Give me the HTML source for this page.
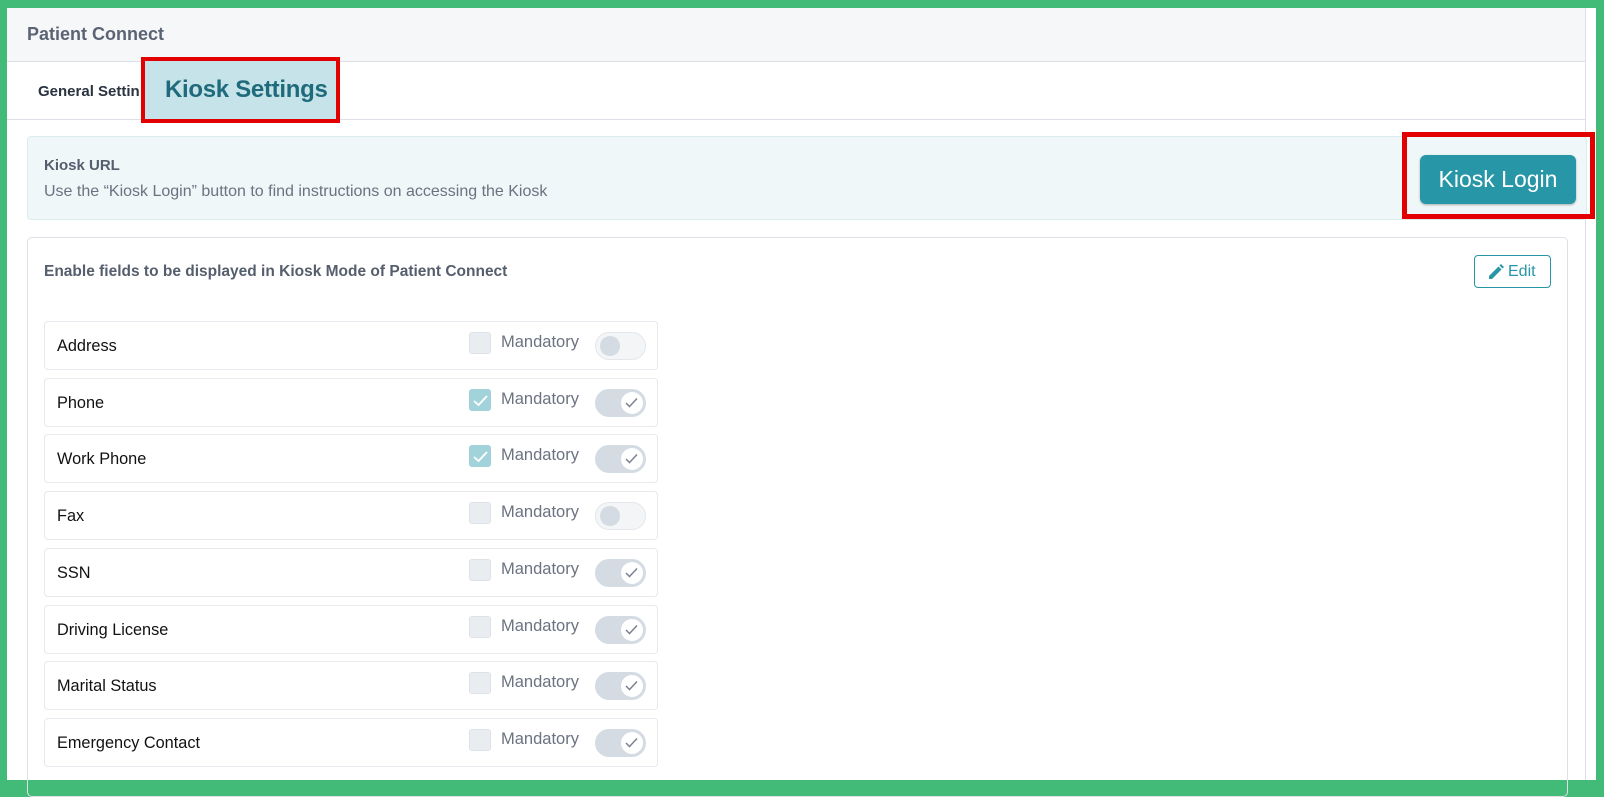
<!DOCTYPE html>
<html><head><style>
*{box-sizing:border-box;margin:0;padding:0}
body{width:1604px;height:788px;background:#43bb78;position:relative;overflow:hidden;font-family:"Liberation Sans",Arial,sans-serif}
.page{position:absolute;left:7px;top:8px;width:1589px;height:772px;background:#fff}
.panel{position:absolute;left:0;top:0;width:1579px;height:772px;border-right:1px solid #dde1e7;background:#fff}
.hdr{position:absolute;left:0;top:0;width:1578px;height:54px;background:#f6f7f9;border-bottom:1px solid #dde1e7}
.hdr span{position:absolute;left:20px;top:16px;font-size:18px;font-weight:bold;color:#5b6474;white-space:nowrap}
.tabs{position:absolute;left:0;top:54px;width:1578px;height:58px;border-bottom:1px solid #dde1e7}
.gen{position:absolute;left:31px;top:21px;font-size:15px;font-weight:bold;color:#2b3340;white-space:nowrap}
.redtab{position:absolute;left:134px;top:49px;width:199px;height:66px;border:4px solid #e30000;background:#c5e3e8}
.redtab span{position:absolute;left:20px;top:15px;font-size:24px;font-weight:bold;color:#1f6b7c;letter-spacing:-0.3px;white-space:nowrap}
.url{position:absolute;left:20px;top:128px;width:1560px;height:84px;background:#eff7f9;border:1px solid #dcecef;border-radius:4px}
.url b{position:absolute;left:16px;top:20px;font-size:15px;color:#555e6c}
.url p{position:absolute;left:16px;top:46px;font-size:16px;color:#6b7280;white-space:nowrap}
.redbtn{position:absolute;left:1395px;top:124px;width:193px;height:87px;border:5px solid #e30000}
.btn{position:absolute;left:1413px;top:147px;width:156px;height:49px;background:#2796a6;border-radius:6px;color:#fff;font-size:23px;text-align:center;line-height:49px;box-shadow:0 1px 2px rgba(0,0,0,.3)}
.card{position:absolute;left:20px;top:229px;width:1541px;height:560px;border:1px solid #dde1e7;border-radius:5px}
.card h3{position:absolute;left:16px;top:25px;font-size:15.5px;color:#555e6c;white-space:nowrap}
.edit{position:absolute;left:1446px;top:17px;width:77px;height:33px;border:1px solid #2796a6;border-radius:4px;color:#2796a6;font-size:16px;line-height:31px;padding-left:33px}
.edit svg{position:absolute;left:13px;top:8px}
.row{position:absolute;left:37px;width:614px;height:49px;border:1px solid #e6e9ee;border-radius:4px}
.row .l{position:absolute;left:12px;top:15px;font-size:16.3px;color:#111;white-space:nowrap}
.cb{position:absolute;left:424px;top:10px;width:22px;height:22px;background:#e9edf1;border:1px solid #dde2e8;border-radius:3px}
.cb.on{background:#a3d3da;border-color:#a3d3da}
.cb svg{position:absolute;left:2px;top:3px}
.m{position:absolute;left:456px;top:11px;font-size:16.5px;color:#6b7280;white-space:nowrap}
.tg{position:absolute;left:550px;top:10px;width:51px;height:28px;border-radius:14px;background:#f3f5f7;border:1px solid #e3e6ea}
.tg::after{content:"";position:absolute;left:4px;top:3px;width:20px;height:20px;border-radius:50%;background:#d5dbe3}
.tg.on{background:#d5dbe3;border-color:#d5dbe3}
.tg.on::after{left:25px;top:2px;width:22px;height:22px;background:#fff}
.tg svg{position:absolute;left:29px;top:7px;z-index:2}
</style></head><body>
<div class="page"><div class="panel">
<div class="hdr"><span>Patient Connect</span></div>
<div class="tabs"><span class="gen">General Settin</span></div>
<div class="redtab"><span>Kiosk Settings</span></div>
<div class="url"><b>Kiosk URL</b><p>Use the “Kiosk Login” button to find instructions on accessing the Kiosk</p></div>
<div class="redbtn"></div>
<div class="btn">Kiosk Login</div>
<div class="card">
<h3>Enable fields to be displayed in Kiosk Mode of Patient Connect</h3>
<div class="edit"><svg width="16" height="16" viewBox="0 0 16 16"><path d="M1 15 L1 12 L10.5 2.5 L13.5 5.5 L4 15 Z M11.5 1.5 L13 0 L16 3 L14.5 4.5 Z" fill="#2796a6"/></svg>Edit</div>
</div>
</div></div>
<div id="rows"></div>
<script>
var d=[["Address",0,0],["Phone",1,1],["Work Phone",1,1],["Fax",0,0],["SSN",0,1],["Driving License",0,1],["Marital Status",0,1],["Emergency Contact",0,1]];
var h="";
var ck='<svg width="17" height="15" viewBox="0 0 17 15"><path d="M2 8 L6.5 12 L15 3" stroke="#fff" stroke-width="1.8" fill="none"/></svg>';
var tk='<svg width="13" height="12" viewBox="0 0 13 12"><path d="M1 6 L4.5 9.5 L12 1.5" stroke="#7b8290" stroke-width="1.5" fill="none"/></svg>';
d.forEach(function(r,i){var t=Math.round(321+56.7*i)-8;h+='<div class="row" style="top:'+t+'px"><span class="l">'+r[0]+'</span><div class="cb'+(r[1]?' on':'')+'">'+(r[1]?ck:'')+'</div><span class="m">Mandatory</span><div class="tg'+(r[2]?' on':'')+'">'+(r[2]?tk:'')+'</div></div>';});
document.getElementById('rows').outerHTML='<div style="position:absolute;left:7px;top:8px">'+h+'</div>';
</script>
</body></html>
